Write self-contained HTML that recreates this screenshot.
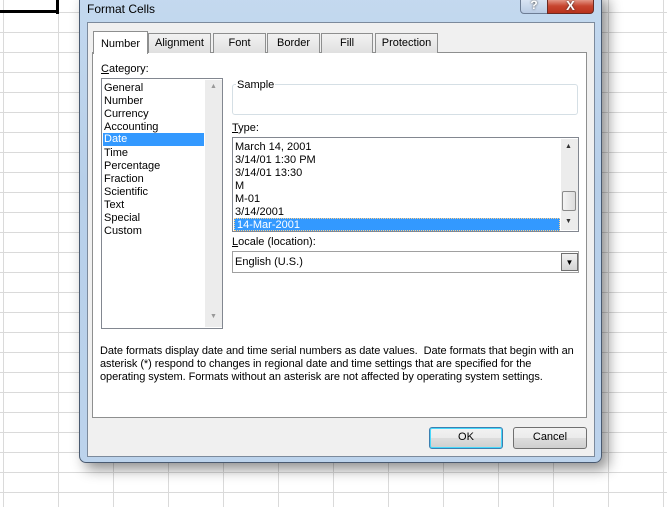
<!DOCTYPE html>
<html><head><style>
*{margin:0;padding:0;box-sizing:border-box}
body{width:667px;height:507px;overflow:hidden;position:relative;background:#fff;font-family:"Liberation Sans",sans-serif;font-size:11px;color:#000;
background-image:linear-gradient(90deg,#dadada 1px,transparent 1px),linear-gradient(#dadada 1px,transparent 1px);
background-size:55px 20px;background-position:3px 12px;}
.a{position:absolute}
.sel{position:absolute;left:0;top:10px;width:58px;height:3px;background:#000}
.sel2{position:absolute;left:56px;top:0;width:3px;height:14px;background:#000}
.dlg{left:79px;top:-8px;width:523px;height:471px;border-radius:7px;border:1px solid #4a5a70;
background:linear-gradient(180deg,#c4d9ef 0%,#b7cfe9 40%,#bcd3ec 100%);box-shadow:6px 6px 14px rgba(0,0,0,.45)}
.client{left:87px;top:22px;width:508px;height:435px;background:#f0f0f0;border:1px solid #7c8a9c}
.panel{left:92px;top:52px;width:495px;height:366px;background:#fff;border:1px solid #8e8f8f}
.tab{position:absolute;top:33px;height:20px;border:1px solid #8e8f8f;border-bottom:none;background:linear-gradient(#f2f2f2,#e0e0e0);text-align:center;line-height:19px}
.tab.on{top:31px;height:23px;background:#fff;z-index:2;line-height:24px}
.lb{border:1px solid #828790;background:#fff}
.it{position:absolute;left:0;height:13px;line-height:13px;white-space:nowrap}
.hl{background:#3399ff;color:#fff}
.sb{position:absolute;background:#ececec}
.btn{border:1px solid #707070;border-radius:3px;background:linear-gradient(#f2f2f2 0%,#ebebeb 50%,#dddddd 51%,#cfcfcf 100%);text-align:center;line-height:19px}
</style></head><body>
<div class="sel"></div><div class="sel2"></div>
<div class="a dlg"></div>
<div class="a" style="left:87px;top:2px;font-size:12px;color:#000">Format Cells</div>
<div class="a" style="left:520px;top:-2px;width:28px;height:16px;border:1px solid #6d7d94;border-radius:0 0 0 4px;background:linear-gradient(#dbe6f4,#b9cbe3);text-align:center;color:#fff;font-weight:bold;font-size:12px;line-height:12px;text-shadow:0 0 2px #333">?</div>
<div class="a" style="left:547px;top:-2px;width:47px;height:16px;border:1px solid #6b2a22;border-radius:0 0 4px 0;background:linear-gradient(#e8a393,#c7452f 50%,#b8321c);text-align:center;color:#fff;font-weight:bold;font-size:13px;line-height:13px;text-shadow:0 0 2px #333">X</div>
<div class="a client"></div>
<div class="a panel"></div>
<div class="tab on" style="left:93px;width:55px">Number</div>
<div class="tab" style="left:148px;width:63px">Alignment</div>
<div class="tab" style="left:213px;width:53px">Font</div>
<div class="tab" style="left:267px;width:53px">Border</div>
<div class="tab" style="left:321px;width:52px">Fill</div>
<div class="tab" style="left:375px;width:63px">Protection</div>

<div class="a" style="left:101px;top:63px"><u>C</u>ategory:</div>
<div class="a lb" style="left:101px;top:78px;width:122px;height:251px">
 <div class="sb" style="left:103px;top:1px;width:17px;height:247px"></div>
 <div class="a" style="left:108px;top:4px;font-size:7px;color:#999">▲</div>
 <div class="a" style="left:108px;top:234px;font-size:7px;color:#999">▼</div>
 <div class="it" style="top:3px;left:2px">General</div>
 <div class="it" style="top:16px;left:2px">Number</div>
 <div class="it" style="top:29px;left:2px">Currency</div>
 <div class="it" style="top:42px;left:2px">Accounting</div>
 <div class="it hl" style="top:54px;left:1px;width:101px;padding-left:1px">Date</div>
 <div class="it" style="top:68px;left:2px">Time</div>
 <div class="it" style="top:81px;left:2px">Percentage</div>
 <div class="it" style="top:94px;left:2px">Fraction</div>
 <div class="it" style="top:107px;left:2px">Scientific</div>
 <div class="it" style="top:120px;left:2px">Text</div>
 <div class="it" style="top:133px;left:2px">Special</div>
 <div class="it" style="top:146px;left:2px">Custom</div>
</div>

<div class="a" style="left:232px;top:84px;width:346px;height:31px;border:1px solid #d5dfe5;border-radius:3px"></div>
<div class="a" style="left:236px;top:79px;background:#fff;padding:0 1px">Sample</div>

<div class="a" style="left:232px;top:122px"><u>T</u>ype:</div>
<div class="a lb" style="left:232px;top:137px;width:347px;height:95px">
 <div class="sb" style="left:328px;top:1px;width:17px;height:91px"></div>
 <div class="a" style="left:332px;top:5px;font-size:7px;color:#333">▲</div>
 <div class="a" style="left:332px;top:80px;font-size:7px;color:#333">▼</div>
 <div class="a" style="left:329px;top:53px;width:14px;height:20px;border:1px solid #8a8a8a;border-radius:2px;background:linear-gradient(90deg,#f4f4f4,#dcdcdc)"></div>
 <div class="it" style="top:3px;left:2px">March 14, 2001</div>
 <div class="it" style="top:16px;left:2px">3/14/01 1:30 PM</div>
 <div class="it" style="top:29px;left:2px">3/14/01 13:30</div>
 <div class="it" style="top:42px;left:2px">M</div>
 <div class="it" style="top:55px;left:2px">M-01</div>
 <div class="it" style="top:68px;left:2px">3/14/2001</div>
 <div class="it hl" style="top:80px;left:1px;width:326px;padding-left:2px;border:1px dotted #ffd08a">14-Mar-2001</div>
</div>

<div class="a" style="left:232px;top:236px"><u>L</u>ocale (location):</div>
<div class="a lb" style="left:232px;top:251px;width:347px;height:22px;border-color:#a0a0a0">
 <div class="it" style="top:4px;left:2px">English (U.S.)</div>
 <div class="a" style="left:328px;top:1px;width:17px;height:18px;border:1px solid #707070;background:linear-gradient(#f2f2f2,#d4d4d4);text-align:center;font-size:8px;line-height:17px">▼</div>
</div>

<div class="a" style="left:100px;top:345px;line-height:13px;width:490px;letter-spacing:-0.07px">Date formats display date and time serial numbers as date values.&nbsp; Date formats that begin with an<br>asterisk (*) respond to changes in regional date and time settings that are specified for the<br>operating system. Formats without an asterisk are not affected by operating system settings.</div>

<div class="a btn" style="left:429px;top:427px;width:74px;height:22px;border-color:#3c7fb1;box-shadow:inset 0 0 0 1px #48d8fb">OK</div>
<div class="a btn" style="left:513px;top:427px;width:74px;height:22px">Cancel</div>
</body></html>
